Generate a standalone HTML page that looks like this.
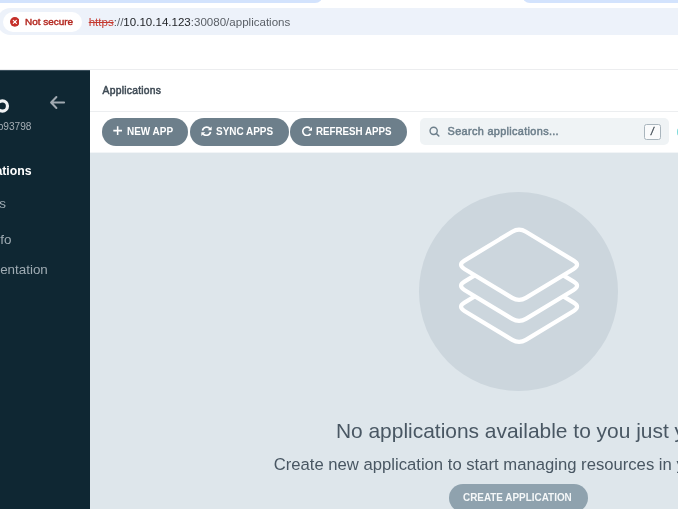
<!DOCTYPE html>
<html><head><meta charset="utf-8">
<style>
html,body{margin:0;padding:0;}
body{width:678px;height:509px;overflow:hidden;position:relative;background:#fff;font-family:"Liberation Sans",sans-serif;}
.abs{position:absolute;}
#tab1{left:-10px;top:-10px;width:333px;height:12.5px;background:#d3e3fd;border-radius:0 0 8px 0;}
#tab2{left:522px;top:-10px;width:170px;height:12.5px;background:#d3e3fd;border-radius:0 0 0 8px;}
#urlbar{left:-3px;top:8px;width:700px;height:27px;background:#edf2fa;border-radius:13.5px;}
#chip{left:3px;top:12px;width:79px;height:20px;background:#fff;border-radius:10px;}
#nsicon{left:9.5px;top:16.9px;width:9.7px;height:9.7px;}
#nstext{left:25px;top:15px;font-size:9.95px;line-height:13px;color:#b3261e;white-space:nowrap;-webkit-text-stroke:0.42px #b3261e;}
#url{left:88.7px;top:14.8px;font-size:11.55px;line-height:14px;color:#23262a;white-space:nowrap;}
#url .s{color:#c5392f;text-decoration:line-through;}
#url .g{color:#5a5f66;}
#topline{left:0;top:69px;width:678px;height:1px;background:#ecedef;}
#side{left:0;top:70px;width:90px;height:439px;background:#0f2733;overflow:hidden;}
#ring{left:-4.45px;top:29.2px;width:7.2px;height:7.2px;border:3.2px solid #f1f3f4;border-radius:50%;}
#ver{right:58.5px;top:50.6px;font-size:10.15px;line-height:12px;color:#a5adb4;white-space:nowrap;}
.nav{right:0;white-space:nowrap;font-size:13.4px;line-height:16px;color:#9fabb3;}
#main{left:90px;top:70px;width:588px;height:439px;background:#dee6eb;overflow:hidden;}
#hdr{left:0;top:0;width:588px;height:41px;background:#fff;border-bottom:1px solid #eceef0;}
#hdrt{left:12.6px;top:14px;font-size:10.3px;line-height:14px;color:#3f4b55;white-space:nowrap;-webkit-text-stroke:0.5px #3f4b55;letter-spacing:0.26px;}
#tool{left:0;top:42px;width:588px;height:40px;background:#fff;border-bottom:1px solid #f2f5f7;}
.btn{top:47.9px;height:28.3px;border-radius:14.15px;background:#6d7f8b;}
.btn span{position:absolute;top:0.3px;color:#fff;font-weight:bold;line-height:28.3px;white-space:nowrap;font-size:10.4px;transform-origin:0 50%;}
#search{left:330.3px;top:48.1px;width:248.6px;height:27.3px;border-radius:5px;background:#eff3f5;}
#stext{left:27.3px;top:5.6px;font-size:10.9px;line-height:15px;color:#6d7f8b;white-space:nowrap;-webkit-text-stroke:0.5px #6d7f8b;letter-spacing:0.33px;}
#key{left:223.8px;top:6px;width:14.6px;height:14.3px;border:1px solid #a9b5bd;border-radius:2.5px;background:#fafbfc;}
#key span{position:absolute;left:0;width:14.6px;top:0.4px;text-align:center;font-size:10px;line-height:14.3px;font-style:italic;color:#3c4650;-webkit-text-stroke:0.3px #3c4650;}
#teal{left:586.7px;top:58.4px;width:3px;height:7.5px;background:#7fdbdb;border-radius:3px 0 0 3px;}
#circle{left:328.95px;top:122.15px;width:198.8px;height:198.8px;border-radius:50%;background:#ccd6dd;}
#t1{left:245.9px;top:348px;font-size:20.94px;line-height:26px;color:#495763;white-space:nowrap;}
#t2{left:183.7px;top:385.4px;font-size:16.66px;line-height:20px;color:#495763;white-space:nowrap;}
#cbtn{left:359px;top:413.6px;width:139px;height:28.3px;border-radius:14.15px;background:#8fa2ae;}
#cbtn span{position:absolute;left:14.3px;top:0.1px;color:#f4f7f8;font-size:10.4px;font-weight:bold;line-height:28.3px;white-space:nowrap;transform-origin:0 50%;transform:scaleX(0.953);}
</style></head><body><div style="position:absolute;left:0;top:0;width:678px;height:509px;will-change:transform;">
<div class="abs" id="tab1"></div><div class="abs" id="tab2"></div>
<div class="abs" id="urlbar"></div>
<div class="abs" id="chip"></div>
<svg class="abs" id="nsicon" viewBox="0 0 10 10"><circle cx="5" cy="5" r="5" fill="#c5302a"/><path d="M3.4 3.4L6.6 6.6M6.6 3.4L3.4 6.6" stroke="#fff" stroke-width="1.2" stroke-linecap="round"/></svg>
<div class="abs" id="nstext">Not secure</div>
<div class="abs" id="url"><span class="s">https</span><span class="g">://</span>10.10.14.123<span class="g">:30080/applications</span></div>
<div class="abs" id="topline"></div>
<div class="abs" id="side"><div class="abs" style="left:0;top:0;width:90px;height:1px;background:#3a4f5c"></div>
  <svg class="abs" style="left:0;top:20px;width:20px;height:30px" viewBox="0 90 20 30"><circle cx="2.37" cy="106" r="5.1" fill="none" stroke="#f1f3f4" stroke-width="3.2"/></svg>
  <svg class="abs" style="left:48px;top:24px;width:19px;height:17px" viewBox="48 94 19 17"><path d="M64.1 102.5H51.8M56.4 97L51.1 102.5L56.4 108" fill="none" stroke="#a0a9b1" stroke-width="2" stroke-linecap="round" stroke-linejoin="round"/></svg>
  <div class="abs" id="ver">v2.4.11+3d9e9f2b93798</div>
  <div class="abs nav" style="right:58.4px;top:92.9px;color:#fff;font-weight:bold;font-size:12.3px">Applications</div>
  <div class="abs nav" style="right:84px;top:125.9px;">Settings</div>
  <div class="abs nav" style="right:78.6px;top:161.6px;">User Info</div>
  <div class="abs nav" style="right:42.2px;top:191.9px;">Documentation</div>
</div>
<div class="abs" id="main">
  <div class="abs" id="hdr"></div>
  <div class="abs" id="hdrt">Applications</div>
  <div class="abs" id="tool"></div>
  <div class="abs btn" style="left:12.4px;width:85.9px;">
    <svg class="abs" style="left:10.9px;top:8.6px;width:9.3px;height:9.3px" viewBox="0 0 9 9"><path d="M4.5 0.3V8.7M0.3 4.5H8.7" stroke="#fff" stroke-width="1.5"/></svg>
    <span style="left:24.8px;transform:scaleX(0.958)">NEW APP</span></div>
  <div class="abs btn" style="left:100px;width:98.5px;">
    <svg class="abs" style="left:10.8px;top:7.7px;width:11px;height:10.5px" viewBox="0 0 16 16" preserveAspectRatio="none"><g fill="none" stroke="#fff" stroke-width="2.4"><path d="M2.2 7A6 6 0 0 1 13 4.2"/><path d="M13.8 9A6 6 0 0 1 3 11.8"/></g><path d="M15.5 0.8V6.5H9.8Z M0.5 15.2V9.5H6.2Z" fill="#fff"/></svg>
    <span style="left:26px;transform:scaleX(0.957)">SYNC APPS</span></div>
  <div class="abs btn" style="left:200.3px;width:116.5px;">
    <svg class="abs" style="left:11.5px;top:7.9px;width:10.6px;height:10.6px" viewBox="0 0 16 16"><path d="M12.04 3.51A6.35 6.35 0 1 0 12.75 11.64" fill="none" stroke="#fff" stroke-width="2.4"/><path d="M16 0.5V7H9.5Z" fill="#fff"/></svg>
    <span style="left:26.1px;transform:scaleX(0.94)">REFRESH APPS</span></div>
  <div class="abs" id="search">
    <svg class="abs" style="left:8px;top:6px;width:14px;height:14px" viewBox="0 0 14 14"><circle cx="5.66" cy="6.86" r="3.6" fill="none" stroke="#6d7f8b" stroke-width="1.4"/><path d="M8.3 9.5L10.8 12" stroke="#6d7f8b" stroke-width="1.6" stroke-linecap="round"/></svg>
    <div class="abs" id="stext">Search applications...</div>
    <div class="abs" id="key"><span>/</span></div>
  </div>
  <div class="abs" id="teal"></div>
  <div class="abs" id="circle"></div>
  <svg class="abs" style="left:358.5px;top:152.5px;width:140px;height:140px" viewBox="448.5 222.5 140 140">
    <g fill="#ccd6dd" stroke="#fff" stroke-width="4.2" stroke-linejoin="round">
      <path id="d" d="M511.71 231.20 Q518.55 227.05 525.39 231.20 L573.16 260.15 Q580.00 264.30 573.16 268.45 L525.39 297.40 Q518.55 301.55 511.71 297.40 L463.94 268.45 Q457.10 264.30 463.94 260.15 Z" transform="translate(0,42)"/>
      <path d="M511.71 231.20 Q518.55 227.05 525.39 231.20 L573.16 260.15 Q580.00 264.30 573.16 268.45 L525.39 297.40 Q518.55 301.55 511.71 297.40 L463.94 268.45 Q457.10 264.30 463.94 260.15 Z" transform="translate(0,21)"/>
      <path d="M511.71 231.20 Q518.55 227.05 525.39 231.20 L573.16 260.15 Q580.00 264.30 573.16 268.45 L525.39 297.40 Q518.55 301.55 511.71 297.40 L463.94 268.45 Q457.10 264.30 463.94 260.15 Z"/>
    </g>
  </svg>
  <div class="abs" id="t1">No applications available to you just yet</div>
  <div class="abs" id="t2">Create new application to start managing resources in your cluster</div>
  <div class="abs" id="cbtn"><span>CREATE APPLICATION</span></div>
</div>
</div></body></html>
